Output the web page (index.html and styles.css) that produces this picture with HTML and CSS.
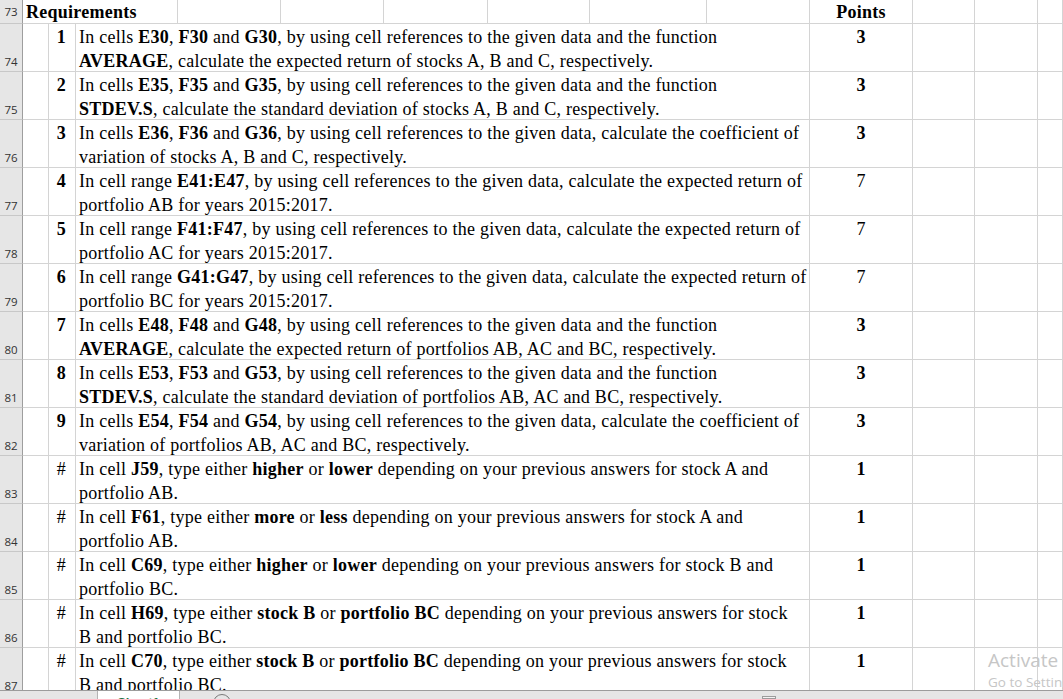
FILE: index.html
```html
<!DOCTYPE html>
<html>
<head>
<meta charset="utf-8">
<link rel="stylesheet" href="styles.css">
</head>
<body>
<div class="sheet">
  <div class="row rtop">
    <div class="rh">73</div>
    <div class="c req b">Requirements</div>
    <div class="c"></div><div class="c"></div><div class="c"></div><div class="c"></div><div class="c"></div><div class="c"></div>
    <div class="c pts b">Points</div>
    <div class="c"></div><div class="c"></div><div class="c"></div>
  </div>

  <div class="row">
    <div class="rh">74</div><div class="c"></div><div class="c num b">1</div>
    <div class="c txt">In cells <b>E30</b>, <b>F30</b> and <b>G30</b>, by using cell references to the given data and the function<br><b>AVERAGE</b>, calculate the expected return of stocks A, B and C, respectively.</div>
    <div class="c pts b">3</div><div class="c"></div><div class="c"></div><div class="c"></div>
  </div>

  <div class="row">
    <div class="rh">75</div><div class="c"></div><div class="c num b">2</div>
    <div class="c txt">In cells <b>E35</b>, <b>F35</b> and <b>G35</b>, by using cell references to the given data and the function<br><b>STDEV.S</b>, calculate the standard deviation of stocks A, B and C, respectively.</div>
    <div class="c pts b">3</div><div class="c"></div><div class="c"></div><div class="c"></div>
  </div>

  <div class="row">
    <div class="rh">76</div><div class="c"></div><div class="c num b">3</div>
    <div class="c txt">In cells <b>E36</b>, <b>F36</b> and <b>G36</b>, by using cell references to the given data, calculate the coefficient of<br>variation of stocks A, B and C, respectively.</div>
    <div class="c pts b">3</div><div class="c"></div><div class="c"></div><div class="c"></div>
  </div>

  <div class="row">
    <div class="rh">77</div><div class="c"></div><div class="c num b">4</div>
    <div class="c txt">In cell range <b>E41:E47</b>, by using cell references to the given data, calculate the expected return of<br>portfolio AB for years 2015:2017.</div>
    <div class="c pts">7</div><div class="c"></div><div class="c"></div><div class="c"></div>
  </div>

  <div class="row">
    <div class="rh">78</div><div class="c"></div><div class="c num b">5</div>
    <div class="c txt">In cell range <b>F41:F47</b>, by using cell references to the given data, calculate the expected return of<br>portfolio AC for years 2015:2017.</div>
    <div class="c pts">7</div><div class="c"></div><div class="c"></div><div class="c"></div>
  </div>

  <div class="row">
    <div class="rh">79</div><div class="c"></div><div class="c num b">6</div>
    <div class="c txt">In cell range <b>G41:G47</b>, by using cell references to the given data, calculate the expected return of<br>portfolio BC for years 2015:2017.</div>
    <div class="c pts">7</div><div class="c"></div><div class="c"></div><div class="c"></div>
  </div>

  <div class="row">
    <div class="rh">80</div><div class="c"></div><div class="c num b">7</div>
    <div class="c txt">In cells <b>E48</b>, <b>F48</b> and <b>G48</b>, by using cell references to the given data and the function<br><b>AVERAGE</b>, calculate the expected return of portfolios AB, AC and BC, respectively.</div>
    <div class="c pts b">3</div><div class="c"></div><div class="c"></div><div class="c"></div>
  </div>

  <div class="row">
    <div class="rh">81</div><div class="c"></div><div class="c num b">8</div>
    <div class="c txt">In cells <b>E53</b>, <b>F53</b> and <b>G53</b>, by using cell references to the given data and the function<br><b>STDEV.S</b>, calculate the standard deviation of portfolios AB, AC and BC, respectively.</div>
    <div class="c pts b">3</div><div class="c"></div><div class="c"></div><div class="c"></div>
  </div>

  <div class="row">
    <div class="rh">82</div><div class="c"></div><div class="c num b">9</div>
    <div class="c txt">In cells <b>E54</b>, <b>F54</b> and <b>G54</b>, by using cell references to the given data, calculate the coefficient of<br>variation of portfolios AB, AC and BC, respectively.</div>
    <div class="c pts b">3</div><div class="c"></div><div class="c"></div><div class="c"></div>
  </div>

  <div class="row">
    <div class="rh">83</div><div class="c"></div><div class="c num">#</div>
    <div class="c txt">In cell <b>J59</b>, type either <b>higher</b> or <b>lower</b> depending on your previous answers for stock A and<br>portfolio AB.</div>
    <div class="c pts b">1</div><div class="c"></div><div class="c"></div><div class="c"></div>
  </div>

  <div class="row">
    <div class="rh">84</div><div class="c"></div><div class="c num">#</div>
    <div class="c txt">In cell <b>F61</b>, type either <b>more</b> or <b>less</b> depending on your previous answers for stock A and<br>portfolio AB.</div>
    <div class="c pts b">1</div><div class="c"></div><div class="c"></div><div class="c"></div>
  </div>

  <div class="row">
    <div class="rh">85</div><div class="c"></div><div class="c num">#</div>
    <div class="c txt">In cell <b>C69</b>, type either <b>higher</b> or <b>lower</b> depending on your previous answers for stock B and<br>portfolio BC.</div>
    <div class="c pts b">1</div><div class="c"></div><div class="c"></div><div class="c"></div>
  </div>

  <div class="row">
    <div class="rh">86</div><div class="c"></div><div class="c num">#</div>
    <div class="c txt">In cell <b>H69</b>, type either <b>stock B</b> or <b>portfolio BC</b> depending on your previous answers for stock<br>B and portfolio BC.</div>
    <div class="c pts b">1</div><div class="c"></div><div class="c"></div><div class="c"></div>
  </div>

  <div class="row">
    <div class="rh">87</div><div class="c"></div><div class="c num">#</div>
    <div class="c txt">In cell <b>C70</b>, type either <b>stock B</b> or <b>portfolio BC</b> depending on your previous answers for stock<br>B and portfolio BC.</div>
    <div class="c pts b">1</div><div class="c"></div><div class="c"></div><div class="c"></div>
  </div>
</div>

<div class="tabbar">
  <div class="tabspace"></div>
  <div class="tab">Sheet1</div>
  <div class="addbtn"></div>
  <div class="tabfill"></div>
  <div class="scrollbox"></div>
</div>

<div class="watermark">
  <div class="wm1">Activate Windows</div>
  <div class="wm2">Go to Settings to activate Windows.</div>
</div>
</body>
</html>
```

FILE: styles.css
```css
* { box-sizing: border-box; }
html, body {
  margin: 0;
  padding: 0;
  width: 1063px;
  height: 699px;
  overflow: hidden;
  background: #fff;
}
body {
  font-family: "Liberation Serif", "Times New Roman", serif;
  font-size: 18px;
  letter-spacing: 0.25px;
  color: #000;
  position: relative;
}
.sheet {
  height: 690px;
  overflow: hidden;
}
.row {
  display: grid;
  grid-template-columns: 23px 26px 27px 734px 103px 62px 63px 1fr;
  height: 48px;
  line-height: 24px;
}
.rtop {
  grid-template-columns: 23px 155px 103px 103px 104px 102px 117px 103px 103px 62px 63px 1fr;
  height: 24px;
}
.c {
  border-right: 1px solid #d4d4d4;
  border-bottom: 1px solid #d4d4d4;
  padding-top: 1px;
  white-space: nowrap;
  overflow: hidden;
}
.rtop .c { padding-top: 0; }
.rh {
  background: #e6e6e6;
  border-right: 1px solid #9e9e9e;
  border-bottom: 1px solid #c8c8c8;
  font-family: "Open Sans", "Liberation Sans", sans-serif;
  font-size: 11.5px;
  letter-spacing: 0;
  color: #333;
  display: flex;
  align-items: flex-end;
  justify-content: center;
  line-height: 14px;
  padding-bottom: 2px;
}
.rtop .rh { align-items: center; padding-bottom: 0; }
.b { font-weight: bold; }
.req { padding-left: 3px; }
.num {
  text-align: right;
  padding-right: 9px;
}
.txt { padding-left: 3px; }
.pts { text-align: center; }

.tabbar {
  height: 9px;
  background: #e6e6e6;
  border-top: 1px solid #9c9c9c;
  display: flex;
}
.tabspace { width: 97px; }
.tab {
  width: 83px;
  background: #fff;
  border-left: 1px solid #b4b4b4;
  border-right: 1px solid #b4b4b4;
  color: #217346;
  font-family: "Liberation Sans", Arial, sans-serif;
  font-weight: bold;
  font-size: 13px;
  letter-spacing: 0;
  line-height: 13px;
  padding-top: 5px;
  text-align: center;
  overflow: hidden;
}
.addbtn {
  width: 18px;
  height: 18px;
  margin: 3px 0 0 33px;
  border: 1px solid #7a7a7a;
  border-radius: 50%;
}
.tabfill { width: 531px; }
.scrollbox {
  width: 14px;
  margin-top: 5px;
  border: 1px solid #9c9c9c;
  background: #f3f3f3;
}

.watermark {
  position: absolute;
  left: 988px;
  top: 648px;
  color: #c6c6c6;
  font-family: "Open Sans", "Liberation Sans", sans-serif;
  letter-spacing: 0;
  white-space: nowrap;
}
.wm1 { font-size: 19px; line-height: 24px; }
.wm2 { font-size: 13.5px; line-height: 18px; margin-top: 1px; }
```
